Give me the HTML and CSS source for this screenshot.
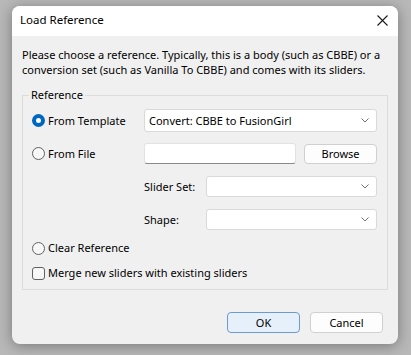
FILE: index.html
```html
<!DOCTYPE html>
<html lang="en">
<head>
    <meta charset="UTF-8" />
    <title>Load Reference</title>
    <link rel="stylesheet" href="styles.css">
</head>
<body>
    <div class="dialog">
        <div class="titlebar">
            <span class="title">Load Reference</span>
            <svg class="close" width="11" height="11" viewBox="0 0 11 11">
                <path d="M0.5 0.5 L10.5 10.5 M10.5 0.5 L0.5 10.5" stroke="#1a1a1a" stroke-width="1.1" fill="none"/>
            </svg>
        </div>
        <div class="content">
            <p class="intro">Please choose a reference. Typically, this is a body (such as CBBE) or a conversion set (such as Vanilla To CBBE) and comes with its sliders.</p>

            <fieldset class="group">
                <legend>Reference</legend>
                <div class="rows">
                    <!-- From Template -->
                    <div class="row row-select">
                        <label class="opt"><input type="radio" name="ref" checked> From Template</label>
                        <div class="combo">
                            <span>Convert: CBBE to FusionGirl</span>
                            <svg class="chev" width="8" height="5" viewBox="0 0 8 5"><path d="M0.5 0.5 L4 4 L7.5 0.5" stroke="#707070" fill="none"/></svg>
                        </div>
                    </div>
                    <!-- From File -->
                    <div class="row row-file">
                        <label class="opt"><input type="radio" name="ref"> From File</label>
                        <div class="file">
                            <div class="textbox"></div>
                            <button type="button" class="btn browse">Browse</button>
                        </div>
                    </div>
                    <!-- Slider Set -->
                    <div class="row row-sub">
                        <span></span>
                        <div class="sub">
                            <span class="sub-label">Slider Set:</span>
                            <div class="combo">
                                <span></span>
                                <svg class="chev" width="8" height="5" viewBox="0 0 8 5"><path d="M0.5 0.5 L4 4 L7.5 0.5" stroke="#707070" fill="none"/></svg>
                            </div>
                        </div>
                    </div>
                    <!-- Shape -->
                    <div class="row row-sub row-shape">
                        <span></span>
                        <div class="sub">
                            <span class="sub-label">Shape:</span>
                            <div class="combo">
                                <span></span>
                                <svg class="chev" width="8" height="5" viewBox="0 0 8 5"><path d="M0.5 0.5 L4 4 L7.5 0.5" stroke="#707070" fill="none"/></svg>
                            </div>
                        </div>
                    </div>
                    <label class="opt single clear"><input type="radio" name="ref"> Clear Reference</label>
                    <label class="opt single"><input type="checkbox"> Merge new sliders with existing sliders</label>
                </div>
            </fieldset>

            <div class="btns">
                <button type="button" class="btn ok">OK</button>
                <button type="button" class="btn">Cancel</button>
            </div>
        </div>
    </div>
</body>
</html>
```

FILE: styles.css
```css
body {
    margin: 0;
    padding: 6px 0 0 12px;
    height: 355px;
    box-sizing: border-box;
    background: #b8b8b8;
    font-family: "Noto Sans", sans-serif;
    font-size: 11px;
    color: #000;
    overflow: hidden;
}
.dialog {
    width: 386px;
    height: 338px;
    border-radius: 8px;
    overflow: hidden;
    background: #f0f0f0;
    box-shadow: 0 2px 14px rgba(0, 0, 0, 0.35);
    display: flex;
    flex-direction: column;
}
.titlebar {
    height: 30px;
    background: #ffffff;
    display: flex;
    align-items: center;
    justify-content: space-between;
    padding: 0 10px 0 8px;
    flex-shrink: 0;
}
.title {
    font-size: 11.5px;
    line-height: 16px;
    margin-top: -2px;
}
.close {
    margin-top: -2px;
}
.content {
    padding: 11px 10px 0 10px;
    display: flex;
    flex-direction: column;
    flex: 1;
}
.intro {
    margin: 0;
    line-height: 15px;
}
.group {
    margin: 10px 0 0 0;
    padding: 0 10px 8px 9px;
    border: 1px solid #dcdcdc;
    border-radius: 0;
}
.group legend {
    margin-left: -3px;
    padding: 0 2px;
    line-height: 16px;
}
.rows {
    display: flex;
    flex-direction: column;
    padding-top: 6px;
}
.row {
    display: grid;
    grid-template-columns: 112px 1fr;
    align-items: center;
}
.row-select {
    height: 23px;
    margin-bottom: 11px;
}
.row-file {
    height: 21px;
    margin-bottom: 12px;
}
.row-sub {
    height: 21px;
    margin-bottom: 12px;
}
.row-shape {
    margin-bottom: 10px;
}
.opt {
    display: flex;
    align-items: center;
    gap: 3px;
    line-height: 16px;
    white-space: nowrap;
}
.opt.single {
    height: 16px;
}
.opt.clear {
    margin-bottom: 9px;
}
.opt input {
    appearance: none;
    margin: 0;
    width: 13px;
    height: 13px;
    box-sizing: border-box;
    border: 1px solid #616161;
    background: #f7f7f7;
    flex-shrink: 0;
}
.opt input[type="radio"] {
    border-radius: 50%;
}
.opt input[type="radio"]:checked {
    border: 4px solid #0067c0;
    background: #ffffff;
}
.opt input[type="checkbox"] {
    border-radius: 3px;
}
.combo {
    height: 23px;
    box-sizing: border-box;
    background: #ffffff;
    border: 1px solid #d9d9d9;
    border-radius: 3px;
    display: flex;
    align-items: center;
    justify-content: space-between;
    padding: 0 7px 0 4px;
}
.sub .combo {
    height: 21px;
}
.file {
    display: flex;
    gap: 8px;
    align-items: center;
}
.textbox {
    width: 152px;
    height: 21px;
    box-sizing: border-box;
    background: #ffffff;
    border: 1px solid #e2e2e2;
    border-bottom-color: #8a8a8a;
    border-radius: 3px;
}
.sub {
    display: grid;
    grid-template-columns: 62px 1fr;
    align-items: center;
}
.btn {
    font-family: "Noto Sans", sans-serif;
    font-size: 11px;
    background: #fdfdfd;
    border: 1px solid #d0d0d0;
    border-radius: 4px;
    color: #000;
    padding: 0;
    height: 20px;
    line-height: 16px;
}
.browse {
    width: 73px;
    height: 20px;
}
.btns {
    display: flex;
    justify-content: flex-end;
    gap: 10px;
    margin-top: 22px;
    padding-right: 5px;
}
.btns .btn {
    width: 73px;
    height: 21px;
}
.btns .ok {
    background: #e6f0fa;
    border-color: #6d9bd1;
}
```
